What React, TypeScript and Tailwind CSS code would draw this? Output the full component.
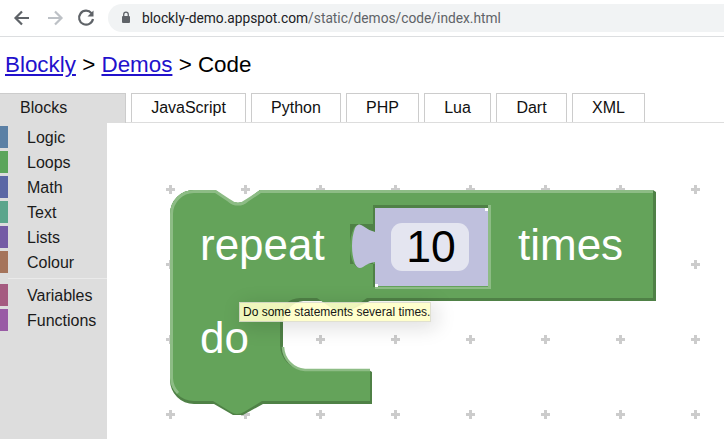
import React from "react";

const cats = [
  ["Logic", "bg-[#5b80a5]"],
  ["Loops", "bg-[#5ba55b]"],
  ["Math", "bg-[#5b67a5]"],
  ["Text", "bg-[#5ba58c]"],
  ["Lists", "bg-[#745ba5]"],
  ["Colour", "bg-[#a5745b]"],
];
const cats2 = [
  ["Variables", "bg-[#a55b80]"],
  ["Functions", "bg-[#995ba5]"],
];
const tabs = [
  ["JavaScript", "w-[115px]"],
  ["Python", "w-[90px]"],
  ["PHP", "w-[73px]"],
  ["Lua", "w-[67px]"],
  ["Dart", "w-[71px]"],
  ["XML", "w-[73px]"],
];

function Row({ label, color }: { label: string; color: string }) {
  return (
    <div className="flex h-[22px] mb-[3px] items-start">
      <div className={`w-[8px] h-[22px] ${color}`} />
      <span className="ml-[19px] pt-[1px] text-[16px] leading-[22px] text-[#1a1a1a]">{label}</span>
    </div>
  );
}

const xs = [170.5, 245.5, 320.5, 395.5, 470.5, 545.5, 620.5, 695.5];
const ys = [189.5, 264.5, 339.5, 414.5];

export default function App() {
  return (
    <div className="w-[724px] h-[439px] overflow-hidden bg-white flex flex-col font-['Liberation_Sans',Arial,sans-serif]">
      {/* browser bar */}
      <div className="h-[37px] shrink-0 border-b border-[#dcdee0] flex items-center">
        <svg width="104" height="36" viewBox="0 0 104 36" className="shrink-0">
          <path d="M29 18H16M22 11.5L15.5 18L22 24.5" fill="none" stroke="#5f6368" strokeWidth="2.2" />
          <path d="M48 18H61M55 11.5L61.5 18L55 24.5" fill="none" stroke="#bdc1c6" strokeWidth="2.2" />
          <path d="M91.5 13.2A7 7 0 1 0 93 19" fill="none" stroke="#5f6368" strokeWidth="2.2" />
          <path d="M93.5 10.5V16.5H87.5Z" fill="#5f6368" />
        </svg>
        <div className="ml-[4px] flex-1 h-[28px] rounded-l-[14px] bg-[#f1f3f4] flex items-center">
          <svg width="12" height="14" viewBox="0 0 12 14" className="ml-[12px] shrink-0">
            <rect x="2" y="5" width="8" height="7" rx="1" fill="#5f6368" />
            <path d="M3.7 5.5V3.5a2.3 2.3 0 0 1 4.6 0V5.5" fill="none" stroke="#5f6368" strokeWidth="1.3" />
          </svg>
          <span className="ml-[10px] text-[13.75px] text-[#5f6368] font-['Roboto',sans-serif]">
            <span className="text-[#202124]">blockly-demo.appspot.com</span>/static/demos/code/index.html
          </span>
        </div>
      </div>

      {/* heading */}
      <div className="h-[56px] shrink-0 pl-[5px] pt-[13px] text-[22.4px] leading-[30px] text-black">
        <a className="underline text-[#2211cc]">Blockly</a> &gt; <a className="underline text-[#2211cc]">Demos</a> &gt; Code
      </div>

      {/* tabs */}
      <div className="h-[30px] shrink-0 flex">
        <div className="w-[126px] h-[30px] bg-[#dddddd] border-t border-r border-[#cccccc] text-[16px] leading-[28px] text-[#1a1a1a] pl-[20px]">
          Blocks
        </div>
        <div className="flex-1 flex gap-[5px] pl-[5px] border-b border-[#dddddd] h-[30px]">
          {tabs.map(([t, w]) => (
            <div
              key={t}
              className={`${w} h-[29px] border border-b-0 border-[#cccccc] text-center text-[16px] leading-[27px] text-[#111111]`}
            >
              {t}
            </div>
          ))}
        </div>
      </div>

      {/* main */}
      <div className="flex-1 flex min-h-0">
        <div className="w-[107px] shrink-0 bg-[#dddddd] pt-[3px] flex flex-col">
          {cats.map(([l, c]) => (
            <Row key={l} label={l} color={c} />
          ))}
          <div className="ml-[8px] h-[1px] bg-[#eaeaea] mt-[2px] mb-[5px]" />
          {cats2.map(([l, c]) => (
            <Row key={l} label={l} color={c} />
          ))}
        </div>
        <div className="relative flex-1">
          <svg width="617" height="316" viewBox="107 123 617 316" className="block">
            {xs.map((x) =>
              ys.map((y) => (
                <path key={`${x}-${y}`} d={`M${x - 4.5} ${y}H${x + 4.5}M${x} ${y - 4.5}V${y + 4.5}`} stroke="#cccccc" strokeWidth="3" />
              ))
            )}
            {/* block shadow offset */}
            <path
              d="M170 214A24 24 0 0 1 194 190H215L229 200Q233 203 238 203Q243 203 247 200L260 190H653L656 192V301H370L346 312H338L322 301H303A23 23 0 0 0 283 322V345A23 23 0 0 0 306 370H369L372 372V404H263L243 415H233L214 404H194A24 24 0 0 1 170 380Z"
              fill="#4f8146"
            />
            <path
              d="M170 214A24 24 0 0 1 194 190H215L229 200Q233 203 238 203Q243 203 247 200L260 190H653V298H367L351 309Q347 312 342 312Q337 312 333 309L317 298H300A20 20 0 0 0 280 318V345A25 25 0 0 0 305 370H370V401H262L244 412Q241 414 237 414Q234 414 231 412L213 401H194A24 24 0 0 1 170 377Z"
              fill="#64a35a"
            />
            {/* highlights */}
            <path d="M178 393A22.5 22.5 0 0 1 171.5 378V214A22.5 22.5 0 0 1 194 191.5H215.5L229 200.5Q233 204 238 204Q243 204 247 200.5L260.5 191.5H653" fill="none" stroke="#8dbc85" strokeWidth="3" />
            <path d="M283 347A24 24 0 0 0 305 370H370" fill="none" stroke="#8dbc85" strokeWidth="2.5" />
            {/* socket: dark edge, light edge, fill */}
            <path d="M375 287H488V205H491V289H375Z" fill="#8dbc85" />
            <path d="M373 205H488V208H375V232Q367 230 362 226Q358 222 354 228Q350 236 350 246Q350 258 354 264Q358 270 362 266Q367 262 373 261V287H375V264H350V224H373Z" fill="#4f8146" />
            <path d="M375 208H488V286H375V262Q368 263 363 267Q358 270 355 264Q352 256 352 246Q352 236 355 228Q358 222 363 226Q368 230 375 232Z" fill="#bfc0dd" />
            <rect x="375" y="284" width="3" height="3" fill="#ffffff" />
            <rect x="485" y="208" width="3" height="3" fill="#ffffff" />
            <rect x="391" y="223" width="78" height="48" rx="11" fill="#e4e5f0" />
            <text x="431" y="262" textAnchor="middle" fontSize="44.5" fill="#000000" fontFamily="'Liberation Sans', Arial, sans-serif">10</text>
            <g fontSize="44" fill="#ffffff" fontFamily="'Liberation Sans', Arial, sans-serif">
              <text x="200" y="260">repeat</text>
              <text x="518" y="260">times</text>
              <text x="200" y="353">do</text>
            </g>
          </svg>
          <div className="absolute left-[132px] top-[179px] w-[192px] h-[20px] bg-[#ffffc7] opacity-90 border border-[#ddddcc] text-[12px] leading-[18px] text-black pl-[3px] whitespace-nowrap shadow-[4px_4px_20px_1px_rgba(0,0,0,0.15)]">
            Do some statements several times.
          </div>
        </div>
      </div>
    </div>
  );
}
